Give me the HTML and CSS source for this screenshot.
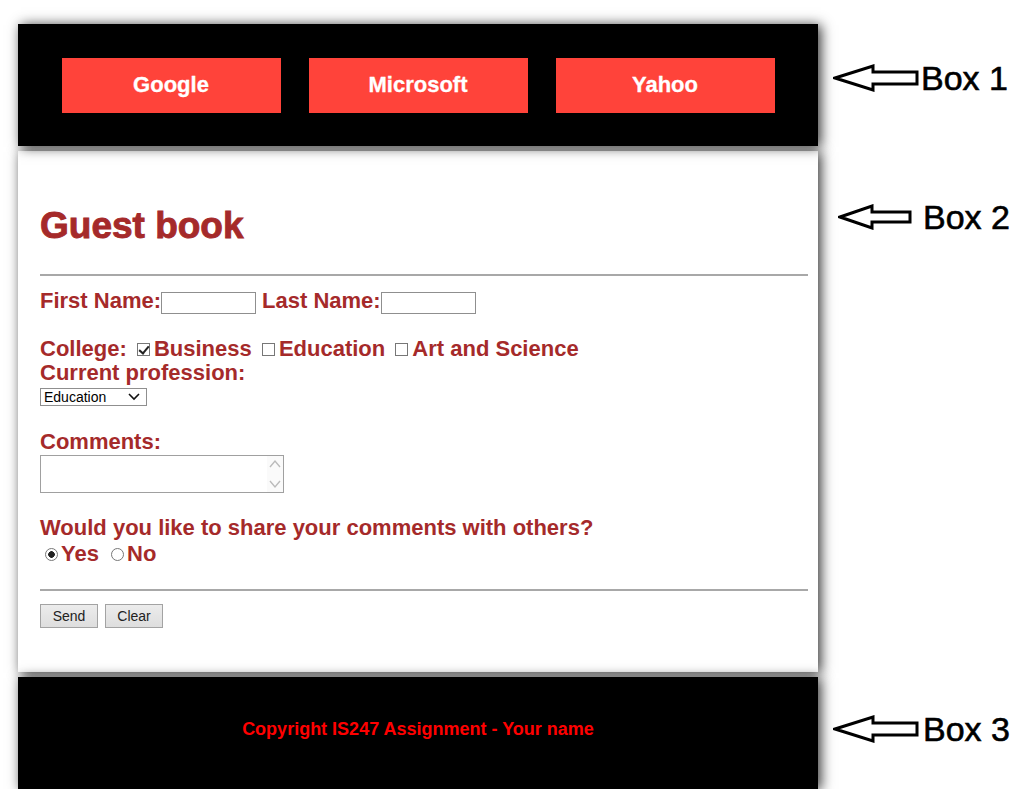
FILE: index.html
```html
<!DOCTYPE html>
<html>
<head>
<meta charset="utf-8">
<title>Guest book</title>
<link rel="stylesheet" href="styles.css">
</head>
<body>
<div class="page">
  <div class="row row-1">
    <nav class="box box-nav">
      <a class="nav-btn" href="#">Google</a>
      <a class="nav-btn" href="#">Microsoft</a>
      <a class="nav-btn" href="#">Yahoo</a>
    </nav>
    <div class="note note-1">
      <svg class="arrow" width="86" height="28" viewBox="0 0 86 28"><path d="M2 14 L40 2 L40 8 L84 8 L84 20 L40 20 L40 26 Z" fill="#fff" stroke="#000" stroke-width="3" stroke-linejoin="miter"/></svg>
      <span class="note-label">Box 1</span>
    </div>
  </div>
  <div class="row row-2">
    <main class="box box-main">
      <h1 class="title">Guest book</h1>
      <hr class="rule">
      <div class="line names">
        <span>First Name:</span><input class="txt" type="text">
        <span class="last">Last Name:</span><input class="txt" type="text">
      </div>
      <div class="line college">
        <span class="college-label">College:</span>
        <label class="opt"><input class="chk" type="checkbox" checked>Business</label>
        <label class="opt"><input class="chk" type="checkbox">Education</label>
        <label class="opt"><input class="chk" type="checkbox">Art and Science</label>
      </div>
      <div class="line">Current profession:</div>
      <div class="select-wrap">
        <select class="sel"><option>Education</option><option>Business</option><option>Other</option></select>
        <svg class="sel-arrow" width="12" height="8" viewBox="0 0 12 8"><path d="M1 1 L6 6 L11 1" fill="none" stroke="#111" stroke-width="1.6"/></svg>
      </div>
      <div class="line comments-label">Comments:</div>
      <div class="ta-wrap">
        <textarea class="ta"></textarea>
        <div class="ta-bar">
          <svg width="12" height="9" viewBox="0 0 12 9"><path d="M1 8 L6 2 L11 8" fill="none" stroke="#bbb" stroke-width="1.4"/></svg>
          <svg width="12" height="9" viewBox="0 0 12 9"><path d="M1 1 L6 7 L11 1" fill="none" stroke="#bbb" stroke-width="1.4"/></svg>
        </div>
      </div>
      <div class="line share">Would you like to share your comments with others?</div>
      <div class="line radios">
        <label class="ropt"><input class="rad" type="radio" name="share" checked>Yes</label>
        <label class="ropt"><input class="rad" type="radio" name="share">No</label>
      </div>
      <hr class="rule rule-2">
      <div class="actions">
        <button class="btn" type="button">Send</button>
        <button class="btn" type="button">Clear</button>
      </div>
    </main>
    <div class="note note-2">
      <svg class="arrow" width="74" height="26" viewBox="0 0 74 26"><path d="M2 13 L34 2 L34 8 L72 8 L72 18 L34 18 L34 24 Z" fill="#fff" stroke="#000" stroke-width="3"/></svg>
      <span class="note-label">Box 2</span>
    </div>
  </div>
  <div class="row row-3">
    <footer class="box box-foot">
      <p class="copy">Copyright IS247 Assignment - Your name</p>
    </footer>
    <div class="note note-3">
      <svg class="arrow" width="86" height="28" viewBox="0 0 86 28"><path d="M2 14 L40 2 L40 8 L84 8 L84 20 L40 20 L40 26 Z" fill="#fff" stroke="#000" stroke-width="3"/></svg>
      <span class="note-label">Box 3</span>
    </div>
  </div>
</div>
</body>
</html>
```
FILE: styles.css
```css
html, body {
  margin: 0;
  padding: 0;
  background: #fff;
  font-family: "Liberation Sans", Arial, sans-serif;
}
.page {
  padding: 24px 0 0 18px;
  display: flex;
  flex-direction: column;
  gap: 5px;
}
.row {
  display: flex;
  align-items: flex-start;
}
.box {
  width: 800px;
  box-sizing: border-box;
  flex: none;
  box-shadow: 3px 1px 12px rgba(0, 0, 0, 0.8);
  position: relative;
}
.box-nav {
  background: #000;
  height: 122px;
  display: flex;
  justify-content: center;
  align-items: center;
  gap: 28px;
  z-index: 1;
}
.nav-btn {
  width: 219px;
  height: 55px;
  background: #ff433a;
  color: #fff;
  font-weight: bold;
  font-size: 22px;
  -webkit-text-stroke: 0.3px #fff;
  text-decoration: none;
  display: flex;
  align-items: center;
  justify-content: center;
}
.box-main {
  background: #fff;
  height: 521px;
  padding: 54px 10px 0 22px;
  color: #a52a2a;
  z-index: 0;
}
.title {
  margin: 0;
  font-size: 37px;
  line-height: 42px;
  font-weight: bold;
  -webkit-text-stroke: 0.9px #a52a2a;
}
.rule {
  margin: 27px 0 0 0;
  border: 0;
  height: 2px;
  background: #a8a8a8;
}
.line {
  font-size: 22px;
  font-weight: bold;
  line-height: 24px;
}
.names {
  margin-top: 12px;
  display: flex;
  align-items: center;
}
.txt {
  width: 95px;
  height: 22px;
  box-sizing: border-box;
  border: 1px solid #8f8f8f;
  margin: 4px 0 0 0;
  padding: 0;
  background: #fff;
}
.last {
  margin-left: 6px;
}
.college {
  margin-top: 23px;
}
.college-label {
  margin-right: 4px;
}
.opt {
  margin-right: 4px;
}
.chk {
  -webkit-appearance: none;
  appearance: none;
  width: 13px;
  height: 13px;
  box-sizing: border-box;
  border: 1px solid #777;
  background: #fff;
  margin: 0 4px 0 0;
  vertical-align: 0;
  position: relative;
}
.chk:checked::after {
  content: "";
  position: absolute;
  left: 3px;
  top: 0px;
  width: 4px;
  height: 8px;
  border: solid #222;
  border-width: 0 2px 2px 0;
  transform: rotate(40deg);
}
.select-wrap {
  margin-top: 3px;
  width: 107px;
  height: 18px;
  position: relative;
}
.sel {
  -webkit-appearance: none;
  appearance: none;
  width: 107px;
  height: 18px;
  box-sizing: border-box;
  border: 1px solid #8f8f8f;
  border-radius: 0;
  background: #fff;
  font-family: "Liberation Sans", Arial, sans-serif;
  font-size: 14px;
  color: #000;
  padding: 0 0 0 3px;
  margin: 0;
}
.sel-arrow {
  position: absolute;
  right: 7px;
  top: 5px;
  pointer-events: none;
}
.comments-label {
  margin-top: 24px;
}
.ta-wrap {
  margin-top: 1px;
  width: 244px;
  height: 38px;
  position: relative;
}
.ta {
  width: 244px;
  height: 38px;
  box-sizing: border-box;
  border: 1px solid #a0a0a0;
  resize: none;
  margin: 0;
  display: block;
}
.ta-bar {
  position: absolute;
  right: 1px;
  top: 1px;
  bottom: 1px;
  width: 16px;
  background: #fafafa;
  display: flex;
  flex-direction: column;
  justify-content: space-between;
  align-items: center;
  padding: 3px 0;
  box-sizing: border-box;
}
.share {
  margin-top: 23px;
}
.radios {
  margin-top: 2px;
  padding-left: 5px;
}
.ropt {
  margin-right: 6px;
}
.rad {
  -webkit-appearance: none;
  appearance: none;
  width: 13px;
  height: 13px;
  box-sizing: border-box;
  border: 1px solid #777;
  border-radius: 50%;
  background: #fff;
  margin: 0 3px 0 0;
  vertical-align: 0;
}
.rad:checked {
  background: radial-gradient(circle, #222 0 3px, #fff 3.6px);
}
.rule-2 {
  margin-top: 23px;
}
.actions {
  margin-top: 13px;
  display: flex;
  gap: 7px;
}
.btn {
  width: 58px;
  height: 24px;
  box-sizing: border-box;
  border: 1px solid #a3a3a3;
  background: linear-gradient(#ececec, #dedede);
  font-family: "Liberation Sans", Arial, sans-serif;
  font-size: 14px;
  color: #222;
  padding: 0;
  border-radius: 0;
}
.box-foot {
  background: #000;
  height: 112px;
  display: flex;
  align-items: center;
  justify-content: center;
  padding-bottom: 8px;
  z-index: 2;
}
.copy {
  margin: 0;
  color: #ff0000;
  font-weight: bold;
  font-size: 18px;
}
.note {
  display: flex;
  align-items: center;
  margin-left: 15px;
}
.note-label {
  font-size: 34px;
  color: #000;
  margin-left: 2px;
  line-height: 34px;
  -webkit-text-stroke: 0.6px #000;
}
.note-1 {
  margin-top: 37px;
}
.note-2 {
  margin-left: 20px;
  margin-top: 49px;
}
.note-2 .note-label {
  margin-left: 11px;
}
.note-3 {
  margin-top: 35px;
}
.note-3 .note-label {
  margin-left: 4px;
}
```
